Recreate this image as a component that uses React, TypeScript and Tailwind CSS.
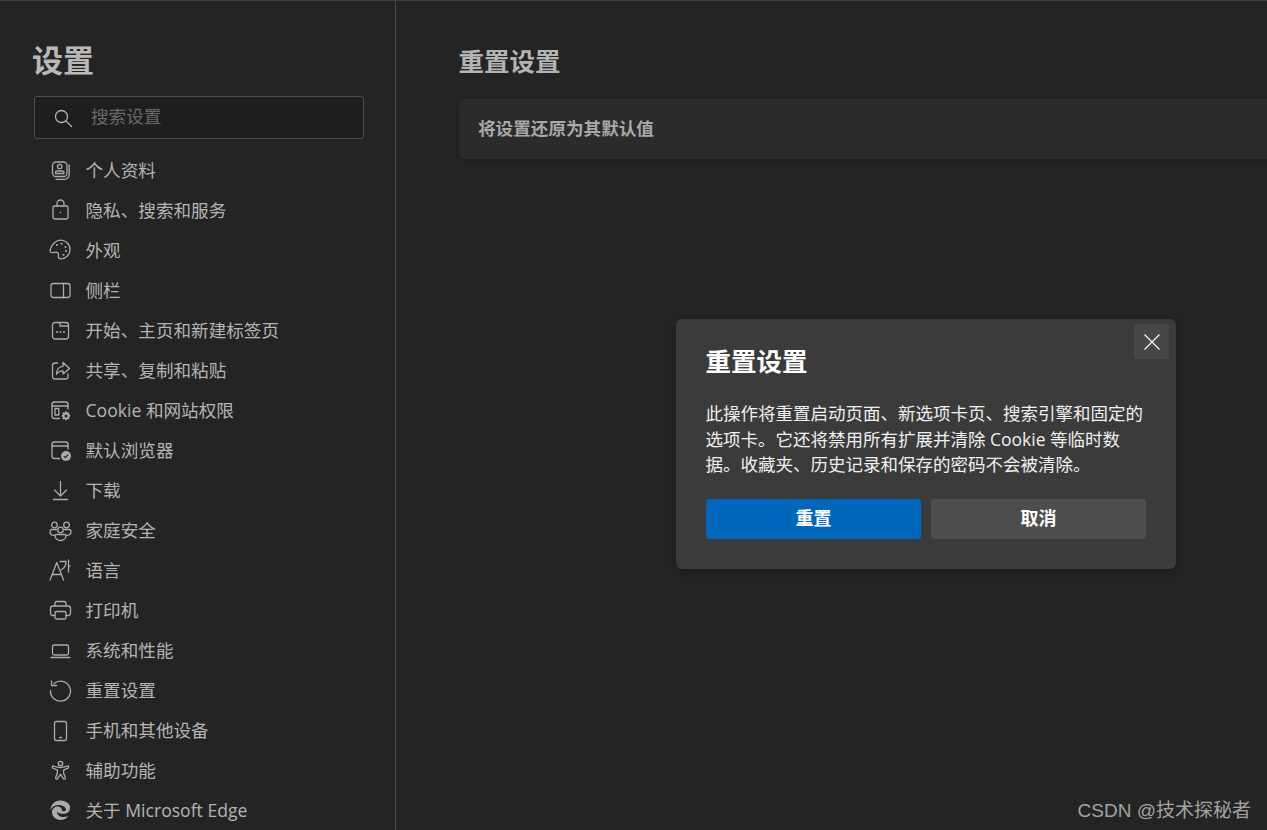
import React from 'react';

const stroke = { fill: 'none', stroke: 'currentColor', strokeWidth: 1.3, strokeLinecap: 'round', strokeLinejoin: 'round' } as const;

// Settings nav icons, drawn on a 24px box
const icons: Record<string, React.ReactNode> = {
  profile: (
    <g {...stroke}>
      <rect x="4.500" y="4" width="14.500" height="14.500" rx="3.500" />
      <path d="M21.200 7v9.500a4.800 4.800 0 0 1-4.800 4.800H8" />
      <circle cx="11.700" cy="8.500" r="2.200" />
      <path d="M7.500 15.500v-1a1.500 1.500 0 0 1 1.500-1.500h5.400a1.500 1.500 0 0 1 1.500 1.500v1z" />
    </g>
  ),
  lock: (
    <g {...stroke}>
      <rect x="5" y="8" width="15" height="13" rx="1.800" />
      <path d="M9 8V5.500a3.500 3.500 0 0 1 7 0V8" />
      <circle cx="12.500" cy="14.500" r="0.800" fill="currentColor" stroke="none" />
    </g>
  ),
  palette: (
    <g {...stroke}>
      <path d="M12.500 2.200c5 0 9.500 3.800 9.500 9.300 0 5-4 9.300-9 9.300-2.200 0-2.800-1.200-2.600-2.800.2-1.400.2-3.400-1.800-3.800-1.700-.3-3 .6-4.600.4C2.300 14.400 1.500 13 2.500 10.800 4 6 8 2.200 12.500 2.200z" />
      <g fill="currentColor" stroke="none">
        <circle cx="9" cy="7" r="1" />
        <circle cx="13.500" cy="5.800" r="1" />
        <circle cx="17.500" cy="9" r="1" />
        <circle cx="18" cy="13" r="1" />
        <circle cx="15.500" cy="16.800" r="1" />
      </g>
    </g>
  ),
  sidebar: (
    <g {...stroke}>
      <rect x="3" y="5.500" width="19" height="14" rx="2.500" />
      <path d="M15.500 5.500v14" />
    </g>
  ),
  newtab: (
    <g {...stroke}>
      <path d="M12 4.500h6a2.500 2.500 0 0 1 2.500 2.500v11.500a2.500 2.500 0 0 1-2.500 2.500H7a2.500 2.500 0 0 1-2.500-2.500V7A2.500 2.500 0 0 1 7 4.500h5v3.500h8.500" />
      <g fill="currentColor" stroke="none">
        <circle cx="9" cy="14" r="1" />
        <circle cx="12.500" cy="14" r="1" />
        <circle cx="16" cy="14" r="1" />
      </g>
    </g>
  ),
  share: (
    <g {...stroke} transform="translate(0.500 1)">
      <path d="M9 4H6.500A2.500 2.500 0 0 0 4 6.500v11A2.500 2.500 0 0 0 6.500 20h10.500a2.500 2.500 0 0 0 2.500-2.500V15" />
      <path d="M14.500 3.500 21 9.500l-6.500 5.500v-3.200c-3 0-5 1-6.500 3.500 0-4.500 2.500-7.800 6.500-8z" />
    </g>
  ),
  cookie: (
    <g>
      <g {...stroke}>
        <path d="M11.500 20.500H6.500A2.500 2.500 0 0 1 4 18V6.500A2.500 2.500 0 0 1 6.500 4h11A2.500 2.500 0 0 1 20 6.500V11" />
        <path d="M4 8h16" />
        <rect x="7" y="10.500" width="3.800" height="6.500" />
      </g>
      <g transform="translate(0.300 0.700)">
        <path fill="currentColor" d="M17 12.500l1.400.2.500 1.300 1.300-.5 1 1-.6 1.300 1.300.6v1.400l-1.300.6.6 1.300-1 1-1.300-.5-.5 1.300h-1.400l-.6-1.300-1.300.5-1-1 .6-1.300-1.300-.6v-1.400l1.300-.6-.6-1.300 1-1 1.300.5z" />
        <circle cx="17.700" cy="17.300" r="1.500" fill="#242424" />
      </g>
    </g>
  ),
  browser: (
    <g>
      <g {...stroke}>
        <path d="M11.500 20.500H6.500A2.500 2.500 0 0 1 4 18V6.500A2.500 2.500 0 0 1 6.500 4h11A2.500 2.500 0 0 1 20 6.500V11" />
        <path d="M4 8h16" />
      </g>
      <circle cx="18" cy="18" r="5" fill="currentColor" />
      <path d="M15.800 18.100l1.600 1.500 2.800-3" fill="none" stroke="#242424" strokeWidth="1.300" />
    </g>
  ),
  download: (
    <g {...stroke}>
      <path d="M12.500 3.500v14M6.500 12l6 6 6-6M5.500 21.500h14" />
    </g>
  ),
  family: (
    <g {...stroke} transform="translate(0.500 1)">
      <circle cx="6" cy="6" r="2.800" />
      <circle cx="18" cy="6" r="2.800" />
      <circle cx="12" cy="11" r="2.800" />
      <path d="M8 10.500H3.500A2 2 0 0 0 1.500 12.500c0 2 1.500 4 4.500 4" />
      <path d="M16 10.500h4.500a2 2 0 0 1 2 2c0 2-1.500 4-4.500 4" />
      <path d="M7.500 15.500h9a1 1 0 0 1 1 1c0 3-2.500 5-5.500 5s-5.500-2-5.500-5a1 1 0 0 1 1-1z" />
    </g>
  ),
  language: (
    <g {...stroke}>
      <path d="M2 22 8.800 4.500 15.500 22M4.300 16.500h9" />
      <path d="M12 3.500h6c0 4-2 7-5 8.500M20.500 2v12M20.500 8h1.500" />
    </g>
  ),
  printer: (
    <g {...stroke} transform="translate(0.500 0)">
      <path d="M6.500 8V5.500a2 2 0 0 1 2-2h7a2 2 0 0 1 2 2V8" />
      <path d="M6.500 17.500H4.500a2.500 2.500 0 0 1-2.500-2.500v-4.500A2.500 2.500 0 0 1 4.500 8h15a2.500 2.500 0 0 1 2.500 2.500V15a2.500 2.500 0 0 1-2.500 2.500h-2" />
      <rect x="6.500" y="13.500" width="11" height="7.500" rx="1.500" />
    </g>
  ),
  laptop: (
    <g {...stroke}>
      <rect x="4.500" y="7" width="16" height="10" rx="1.800" />
      <path d="M3 19.500h19" />
    </g>
  ),
  reset: (
    <g {...stroke}>
      <path d="M6 5.500A10 10 0 1 1 2.500 12.500" />
      <path d="M3.500 3v4.500h5" />
    </g>
  ),
  phone: (
    <g {...stroke}>
      <rect x="6.500" y="3.500" width="12" height="19" rx="2" />
      <path d="M11.500 19.500h2" />
    </g>
  ),
  accessibility: (
    <g {...stroke}>
      <circle cx="12.500" cy="5.500" r="2.200" />
      <path d="M5.500 8c2 .8 4 1.500 7 1.500s5-.7 7-1.500c1.300-.2 1.600 1.700.6 2.200l-4.600 2c-.3 2 .3 4.500 1.800 7.300.5 1.400-1 2-1.900 1.200l-2.900-4.400-2.900 4.400c-.9.800-2.400.2-1.900-1.200 1.500-2.800 2.100-5.300 1.800-7.300l-4.600-2c-1-.5-.7-2.400.6-2.200z" />
    </g>
  ),
  edge: (
    <g fill="currentColor">
      <path d="M12.500 2.500C6.700 2.500 2.800 6.500 2.500 12 4 8.800 7 7 10.500 7c4.500 0 7.500 2.500 7.500 4.500 0 1.200-1 1.800-2.300 1.800-1 0-1.700-.3-1.700-.3.300-2.700-2-4.500-4.700-4.500-3 0-5.300 2.500-5.300 5.500 0 1.500.4 3 1.300 4.300 1.700 2.500 4.200 3.700 7 3.700 3.500 0 6-1.300 8-4.100-2 1-4.500 1.500-6.500 1-3-.7-5-3-5-5.500 3 3.500 13.200 4 13.200-3.700C22.500 6.500 18.500 2.500 12.500 2.500z" />
    </g>
  ),
};

const navItems = [
  { icon: 'profile', label: '个人资料' },
  { icon: 'lock', label: '隐私、搜索和服务' },
  { icon: 'palette', label: '外观' },
  { icon: 'sidebar', label: '侧栏' },
  { icon: 'newtab', label: '开始、主页和新建标签页' },
  { icon: 'share', label: '共享、复制和粘贴' },
  { icon: 'cookie', label: 'Cookie 和网站权限' },
  { icon: 'browser', label: '默认浏览器' },
  { icon: 'download', label: '下载' },
  { icon: 'family', label: '家庭安全' },
  { icon: 'language', label: '语言' },
  { icon: 'printer', label: '打印机' },
  { icon: 'laptop', label: '系统和性能' },
  { icon: 'reset', label: '重置设置' },
  { icon: 'phone', label: '手机和其他设备' },
  { icon: 'accessibility', label: '辅助功能' },
  { icon: 'edge', label: '关于 Microsoft Edge' },
];

const NavIcon: React.FC<{ name: string }> = ({ name }) => (
  <svg viewBox="0 0 24 24" className="h-6 w-6 shrink-0 text-[#ababab]">
    {icons[name]}
  </svg>
);

export default function App() {
  return (
    <div className="relative flex h-[830px] w-[1267px] overflow-hidden border-t border-[#3d3d3d] bg-[#242424] font-['Open_Sans','Noto_Sans_CJK_SC',sans-serif] text-[17.6px] text-[#b4b4b4]">
      {/* Sidebar */}
      <aside className="w-[396px] shrink-0 border-r border-[#4a4a4a] pt-[40px]">
        <h1 className="ml-[32px] h-[38px] text-[31px] leading-[38px] font-bold text-[#b9b9b9]">设置</h1>
        <div className="mt-[17px] ml-[34px] flex h-[43px] w-[330px] items-center rounded-[3px] border border-[#4d4d4d] bg-[#1e1e1e] pl-[18px]">
          <svg viewBox="0 0 20 20" className="h-5 w-5 text-[#b0b0b0]" fill="none" stroke="currentColor" strokeWidth="1.300">
            <circle cx="8.500" cy="8.500" r="6" />
            <path d="M13 13l5.500 5.500" strokeLinecap="round" />
          </svg>
          <span className="ml-[18px] pb-[2px] text-[#686868]">搜索设置</span>
        </div>
        <nav className="mt-[11px] ml-[48px] flex flex-col">
          {navItems.map((item) => (
            <div key={item.label} className="flex h-10 items-center gap-[13.500px]">
              <NavIcon name={item.icon} />
              <span>{item.label}</span>
            </div>
          ))}
        </nav>
      </aside>

      {/* Main */}
      <main className="flex-1 pt-[45px] pl-[62.500px]">
        <h2 className="h-[30px] text-[25.500px] leading-[30px] font-bold text-[#b4b4b4]">重置设置</h2>
        <div className="mt-[23px] -mr-4 ml-[0.500px] flex h-[60px] items-center rounded-md bg-[#2b2b2b] pb-[2px] pl-[19px] font-bold text-[#a8a8a8] shadow-[0_1px_3px_rgba(0,0,0,0.25)]">
          将设置还原为其默认值
        </div>
      </main>

      {/* Reset dialog */}
      <div className="absolute top-[318px] left-[676px] h-[250px] w-[500px] rounded-md bg-[#3b3b3b] px-[30px] pt-[23px] text-white shadow-[0_2px_8px_rgba(0,0,0,0.3)]">
        <button className="absolute top-[5px] right-[7px] flex h-[35px] w-[35px] items-center justify-center rounded-[3px] bg-[#474747]">
          <svg viewBox="0 0 16 16" className="h-4 w-4" fill="none" stroke="currentColor" strokeWidth="1.100">
            <path d="M0.500 0.500l15 15M15.500 0.500l-15 15" />
          </svg>
        </button>
        <h3 className="-ml-[0.500px] h-[38px] text-[25.500px] leading-[38px] font-bold">重置设置</h3>
        <p className="mt-[21px] -ml-[0.500px] w-[442px] text-[17.5px] leading-[25.500px] text-[#f0f0f0]">
          此操作将重置启动页面、新选项卡页、搜索引擎和固定的选项卡。它还将禁用所有扩展并清除 Cookie 等临时数据。收藏夹、历史记录和保存的密码不会被清除。
        </p>
        <div className="mt-[21px] flex gap-[10px]">
          <button className="h-10 w-[215px] rounded-[3px] bg-[#0067bd] pb-[1px] text-[18px] font-bold">重置</button>
          <button className="h-10 w-[215px] rounded-[3px] bg-[#4d4d4d] pb-[1px] text-[18px] font-bold">取消</button>
        </div>
      </div>

      {/* Watermark */}
      <div className="absolute right-[16px] bottom-[5px] font-['Liberation_Sans','Noto_Sans_CJK_SC',sans-serif] text-[19px] text-[#a3a3a3]">
        CSDN @技术探秘者
      </div>
    </div>
  );
}
